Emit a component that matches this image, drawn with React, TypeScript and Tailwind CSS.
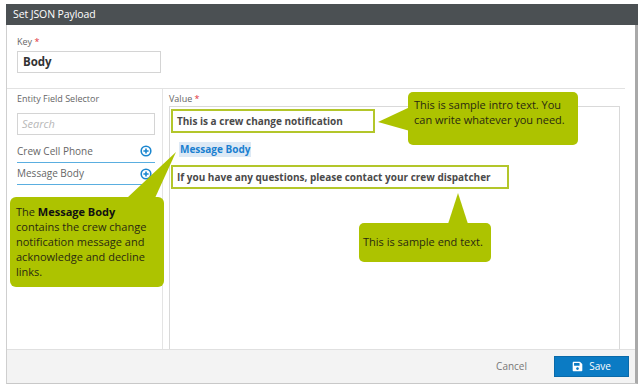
import React from "react";
import { FaSave } from "react-icons/fa";

const GREEN = "#adc300";

function PlusIcon() {
  return (
    <svg width="12" height="12" viewBox="0 0 12 12" className="shrink-0">
      <circle cx="6" cy="6" r="4.8" fill="none" stroke="#1a86cf" strokeWidth="1.6" />
      <path d="M6 3.4v5.2M3.4 6h5.2" stroke="#1a86cf" strokeWidth="1.6" />
    </svg>
  );
}

export default function App() {
  return (
    <div
      className="relative w-[642px] h-[388px] bg-white overflow-hidden"
      style={{ fontFamily: '"Open Sans", "Liberation Sans", sans-serif' }}
    >
      <div className="absolute left-[6px] top-[4px] w-[632px] h-[380px] flex flex-col">
        {/* header */}
        <div className="h-[21px] bg-[#4b5053] flex items-center pl-[7px] text-white text-[10.5px] tracking-[-0.1px]">
          Set JSON Payload
        </div>
        {/* body */}
        <div className="flex-1 flex flex-col border-l border-l-[#cfcfcf] border-r-[3px] border-r-[#a9a9a9] border-b border-b-[#c8c8c8]">
          <div className="flex-1 flex flex-col min-h-0">
            {/* key section */}
            <div className="pl-[10px] pt-[11px] pb-[15px] mr-[10px] border-b border-[#e2e2e2]">
              <div className="text-[9px] text-[#666] leading-[12px]">
                Key <span className="text-[#e0303a]">*</span>
              </div>
              <div className="mt-[3px] w-[144px] h-[22px] border border-[#d4d4d4] flex items-center pl-[5px] text-[11.5px] font-bold text-[#333]">
                Body
              </div>
            </div>
            {/* columns */}
            <div className="flex-1 flex min-h-0">
              <div className="w-[156px] border-r border-[#e4e4e4] pl-[10px] pr-[7px] pt-[4px]">
                <div className="text-[9px] text-[#666] leading-[12px]">Entity Field Selector</div>
                <div className="mt-[8px] h-[22px] border border-[#d4d4d4] flex items-center pl-[4px] text-[11px] italic text-[#b8b8b8]">
                  Search
                </div>
                <div className="mt-[5px] h-[23px] border-b border-[#5aaee0] flex items-center justify-between pr-[3px] text-[10px] text-[#666]">
                  <span>Crew Cell Phone</span>
                  <PlusIcon />
                </div>
                <div className="h-[22px] border-b border-[#5aaee0] flex items-center justify-between pr-[3px] text-[10px] text-[#666]">
                  <span>Message Body</span>
                  <PlusIcon />
                </div>
              </div>
              <div className="flex-1 flex flex-col pl-[6px] pr-[15px] pt-[4px]">
                <div className="text-[9px] text-[#666] leading-[12px]">
                  Value <span className="text-[#e0303a]">*</span>
                </div>
                <div className="mt-[1px] flex-1 border border-[#d9d9d9] border-b-0 pl-[1px] pt-[2px] flex flex-col items-start">
                  <div className="h-[24px] w-[204px] border-2 border-[#b3c62a] flex items-center pl-[4px] text-[10px] font-bold text-[#4a4a4a]">
                    This is a crew change notification
                  </div>
                  <div className="mt-[9px] ml-[8px] px-[1px] bg-[#dde9f5] text-[10px] font-bold text-[#1a7fd0] leading-[15px]">
                    Message Body
                  </div>
                  <div className="mt-[8px] h-[24px] w-[338px] border-2 border-[#b3c62a] flex items-center pl-[4px] text-[10px] font-bold text-[#4a4a4a]">
                    If you have any questions, please contact your crew dispatcher
                  </div>
                </div>
              </div>
            </div>
          </div>
          {/* footer */}
          <div className="h-[34px] bg-[#f3f3f3] border-t border-[#e0e0e0] flex items-center justify-end pr-[6px]">
            <span className="text-[10px] text-[#777] mr-[27px]">Cancel</span>
            <div className="w-[75px] h-[21px] bg-[#0b7bc4] border border-[#0a6aa9] flex items-center justify-center gap-[6px] text-white text-[10px]">
              <FaSave size={11} />
              <span>Save</span>
            </div>
          </div>
        </div>
      </div>

      {/* callout pointers */}
      <svg className="absolute inset-0 pointer-events-none" width="642" height="388">
        <polygon points="378,122 410,107 410,131" fill={GREEN} />
        <polygon points="458,193 448,224 468,224" fill={GREEN} />
        <polygon points="176,152 127,198 155,198" fill={GREEN} />
      </svg>

      {/* callouts */}
      <div className="absolute left-[408px] top-[92px] w-[170px] h-[53px] rounded-[5px] bg-[#adc300] px-[6px] pt-[5px] text-[11px] leading-[15px] text-[#2a2a10]">
        This is sample intro text. You can write whatever you need.
      </div>
      <div className="absolute left-[359px] top-[223px] w-[132px] h-[39px] rounded-[5px] bg-[#adc300] flex items-center pl-[4px] text-[11px] text-[#2a2a10]">
        This is sample end text.
      </div>
      <div className="absolute left-[10px] top-[197px] w-[154px] h-[90px] rounded-[6px] bg-[#adc300] pl-[6px] pr-[4px] pt-[7px] text-[11px] leading-[15px] text-[#2a2a10]">
        The <b className="text-[#111]">Message Body</b> contains the crew change notification message and acknowledge and decline links.
      </div>
    </div>
  );
}
